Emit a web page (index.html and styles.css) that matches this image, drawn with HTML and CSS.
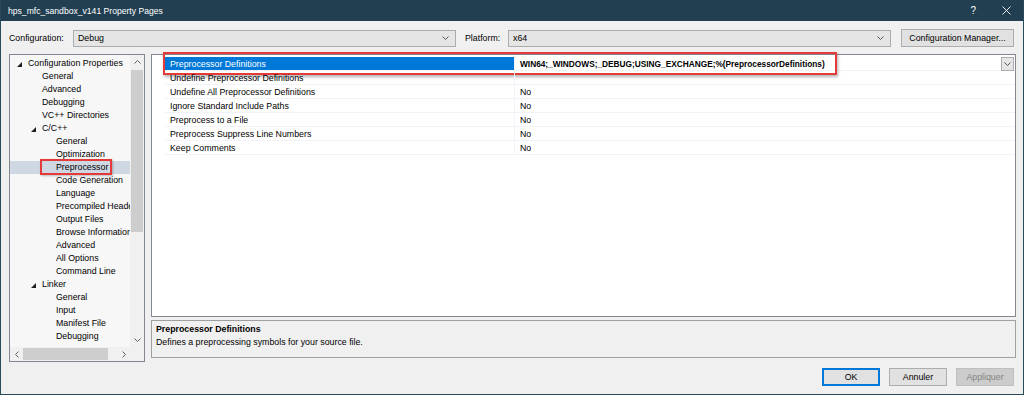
FILE: index.html
```html
<!DOCTYPE html>
<html lang="en">
  <head>
    <meta charset="UTF-8" />
    <title>hps_mfc_sandbox_v141 Property Pages</title>
    <link rel="stylesheet" href="styles.css">
  </head>
  <body>
    <div class="window">
      <div class="titlebar">
        <span class="title">hps_mfc_sandbox_v141 Property Pages</span>
        <span class="help">?</span>
        <svg class="close" width="9" height="9" viewBox="0 0 9 9">
          <path d="M0.5 0.5 L8.5 8.5 M8.5 0.5 L0.5 8.5" stroke="#fff" stroke-width="0.9" fill="none" />
        </svg>
      </div>

      <div class="config-row">
        <span class="cfg-label">Configuration:</span>
        <div class="combo">
          <span>Debug</span>
          <svg class="chev" width="7" height="4" viewBox="0 0 7 4"><path d="M0.5 0.5 L3.5 3.5 L6.5 0.5" stroke="#555" fill="none" /></svg>
        </div>
        <span class="plat-label">Platform:</span>
        <div class="combo">
          <span>x64</span>
          <svg class="chev" width="7" height="4" viewBox="0 0 7 4"><path d="M0.5 0.5 L3.5 3.5 L6.5 0.5" stroke="#555" fill="none" /></svg>
        </div>
        <button class="btn cfg-btn">Configuration Manager...</button>
      </div>

      <div class="main">
        <div class="tree">
          <div class="tree-items">
            <div class="node t0"><span class="twisty"><svg width="5" height="5" viewBox="0 0 5 5"><polygon points="5,0 5,5 0,5" fill="#1e1e1e" /></svg></span>Configuration Properties</div>
            <div class="node t1">General</div>
            <div class="node t1">Advanced</div>
            <div class="node t1">Debugging</div>
            <div class="node t1">VC++ Directories</div>
            <div class="node t1"><span class="twisty"><svg width="5" height="5" viewBox="0 0 5 5"><polygon points="5,0 5,5 0,5" fill="#1e1e1e" /></svg></span>C/C++</div>
            <div class="node t2">General</div>
            <div class="node t2">Optimization</div>
            <div class="node t2 selected"><span class="marked">Preprocessor</span></div>
            <div class="node t2">Code Generation</div>
            <div class="node t2">Language</div>
            <div class="node t2">Precompiled Headers</div>
            <div class="node t2">Output Files</div>
            <div class="node t2">Browse Information</div>
            <div class="node t2">Advanced</div>
            <div class="node t2">All Options</div>
            <div class="node t2">Command Line</div>
            <div class="node t1"><span class="twisty"><svg width="5" height="5" viewBox="0 0 5 5"><polygon points="5,0 5,5 0,5" fill="#1e1e1e" /></svg></span>Linker</div>
            <div class="node t2">General</div>
            <div class="node t2">Input</div>
            <div class="node t2">Manifest File</div>
            <div class="node t2">Debugging</div>
          </div>
          <div class="vscroll">
            <div class="arrow"><svg width="7" height="4" viewBox="0 0 7 4"><path d="M0.5 3.5 L3.5 0.5 L6.5 3.5" stroke="#606060" fill="none" /></svg></div>
            <div class="vthumb"></div>
            <div class="track"></div>
            <div class="arrow"><svg width="7" height="4" viewBox="0 0 7 4"><path d="M0.5 0.5 L3.5 3.5 L6.5 0.5" stroke="#606060" fill="none" /></svg></div>
          </div>
          <div class="hscroll">
            <div class="arrow"><svg width="4" height="7" viewBox="0 0 4 7"><path d="M3.5 0.5 L0.5 3.5 L3.5 6.5" stroke="#606060" fill="none" /></svg></div>
            <div class="hthumb"></div>
            <div class="track"></div>
            <div class="arrow"><svg width="4" height="7" viewBox="0 0 4 7"><path d="M0.5 0.5 L3.5 3.5 L0.5 6.5" stroke="#606060" fill="none" /></svg></div>
          </div>
          <div class="corner"></div>
        </div>

        <div class="right">
          <div class="grid">
            <div class="prop active">
              <div class="pname">Preprocessor Definitions</div>
              <div class="pval strong">WIN64;_WINDOWS;_DEBUG;USING_EXCHANGE;%(PreprocessorDefinitions)</div>
              <div class="drop"><svg width="7" height="4" viewBox="0 0 7 4"><path d="M0.5 0.5 L3.5 3.5 L6.5 0.5" stroke="#555" fill="none" /></svg></div>
            </div>
            <div class="prop"><div class="pname">Undefine Preprocessor Definitions</div><div class="pval"></div></div>
            <div class="prop"><div class="pname">Undefine All Preprocessor Definitions</div><div class="pval">No</div></div>
            <div class="prop"><div class="pname">Ignore Standard Include Paths</div><div class="pval">No</div></div>
            <div class="prop"><div class="pname">Preprocess to a File</div><div class="pval">No</div></div>
            <div class="prop"><div class="pname">Preprocess Suppress Line Numbers</div><div class="pval">No</div></div>
            <div class="prop"><div class="pname">Keep Comments</div><div class="pval">No</div></div>
          </div>
          <div class="desc">
            <div class="desc-title">Preprocessor Definitions</div>
            <div>Defines a preprocessing symbols for your source file.</div>
          </div>
        </div>
      </div>

      <div class="footer">
        <button class="btn default">OK</button>
        <button class="btn">Annuler</button>
        <button class="btn" disabled>Appliquer</button>
      </div>
    </div>
  </body>
</html>
```

FILE: styles.css
```css
body {
  margin: 0;
  font-family: "Liberation Sans", Arial, sans-serif;
  font-size: 8.8px;
  color: #000;
}
.window {
  width: 1024px;
  height: 395px;
  box-sizing: border-box;
  background: #f0f0f0;
  border: 1px solid #2a4a5c;
  border-top: none;
  display: flex;
  flex-direction: column;
  overflow: hidden;
}
.titlebar {
  height: 21px;
  margin: 0 -1px;
  background: #223f51;
  color: #fff;
  display: flex;
  align-items: center;
  padding: 0 0 0 8px;
}
.title {
  flex: 1;
  font-size: 8.6px;
}
.help {
  font-size: 10px;
  margin-right: 26px;
}
.close {
  margin-right: 13px;
}
.config-row {
  display: flex;
  align-items: center;
  height: 18px;
  margin-top: 8px;
  padding-left: 8px;
}
.config-row > * {
  flex-shrink: 0;
}
.cfg-label {
  width: 64px;
}
.combo {
  width: 383px;
  height: 17px;
  box-sizing: border-box;
  background: #e5e5e5;
  border: 1px solid #acacac;
  display: flex;
  align-items: center;
  justify-content: space-between;
  padding: 0 6px 0 4px;
}
.plat-label {
  width: 43px;
  margin-left: 9px;
}
.btn {
  font-family: inherit;
  font-size: 8.8px;
  background: #e1e1e1;
  border: 1px solid #adadad;
  color: #000;
  padding: 0;
  height: 18px;
}
.cfg-btn {
  width: 113px;
  margin-left: 10px;
}
.main {
  display: flex;
  gap: 6px;
  margin-top: 7px;
  padding-left: 8px;
  height: 308px;
}
.tree {
  width: 136px;
  box-sizing: border-box;
  border: 1px solid #828790;
  background: #f7f7f7;
  display: grid;
  grid-template-columns: 1fr 14px;
  grid-template-rows: 1fr 14px;
  overflow: hidden;
}
.tree-items {
  padding-top: 2px;
  overflow: hidden;
  white-space: nowrap;
}
.node {
  height: 13px;
  line-height: 13px;
}
.t0 { padding-left: 18px; }
.t1 { padding-left: 32px; }
.t2 { padding-left: 46px; }
.twisty {
  display: inline-block;
  width: 11px;
  margin-left: -11px;
  vertical-align: top;
  line-height: 13px;
}
.twisty svg {
  vertical-align: -1px;
}
.node.selected {
  background: #cfd7e3;
}
.marked {
  position: relative;
}
.marked::after {
  content: "";
  position: absolute;
  left: -16px;
  right: -4px;
  top: -3px;
  bottom: -3px;
  border: 2px solid #e53a3a;
  box-shadow: 1px 1px 2px rgba(0, 0, 0, 0.25);
}
.vscroll {
  display: flex;
  flex-direction: column;
  background: #f0f0f0;
}
.vscroll .arrow {
  height: 14px;
  display: flex;
  align-items: center;
  justify-content: center;
}
.vthumb {
  height: 162px;
  margin: 1px 1px 0;
  background: #cdcdcd;
}
.track {
  flex: 1;
}
.hscroll {
  display: flex;
  background: #f0f0f0;
}
.hscroll .arrow {
  width: 13px;
  display: flex;
  align-items: center;
  justify-content: center;
}
.hthumb {
  width: 85px;
  margin: 1px 0;
  background: #cdcdcd;
}
.corner {
  background: #f0f0f0;
}
.right {
  width: 865px;
  display: flex;
  flex-direction: column;
  gap: 3px;
}
.grid {
  height: 263px;
  box-sizing: border-box;
  border: 1px solid #828790;
  background: #fff;
  padding: 2px 0 0 13px;
}
.prop {
  display: flex;
  height: 14px;
  line-height: 14px;
  box-sizing: border-box;
  border-bottom: 1px solid #f0f3f7;
  position: relative;
}
.pname {
  width: 350px;
  padding-left: 5px;
  box-sizing: border-box;
  border-right: 1px solid #f0f3f7;
}
.pval {
  flex: 1;
  padding-left: 5px;
}
.strong {
  font-weight: bold;
  font-size: 8.3px;
}
.prop.active .pname {
  background: #0078d7;
  color: #fff;
}
.prop.active::after {
  content: "";
  position: absolute;
  left: -2px;
  top: -5px;
  width: 670px;
  height: 19px;
  border: 2px solid #e53a3a;
  box-shadow: 1px 2px 3px rgba(0, 0, 0, 0.3);
}
.drop {
  width: 11px;
  height: 12px;
  margin: 0 1px 0 0;
  background: #e5e5e5;
  border: 1px solid #adadad;
  display: flex;
  align-items: center;
  justify-content: center;
}
.desc {
  height: 38px;
  box-sizing: border-box;
  border: 1px solid #a0a0a0;
  background: #f0f0f0;
  padding: 2px 4px;
  line-height: 13px;
}
.desc-title {
  font-weight: bold;
}
.footer {
  display: flex;
  justify-content: flex-end;
  gap: 9px;
  margin-top: 6px;
  padding-right: 9px;
}
.footer .btn {
  width: 58px;
}
.btn.default {
  border-color: #0078d7;
  box-shadow: inset 0 0 0 1px #0078d7;
}
.btn:disabled {
  background: #cccccc;
  border-color: #bfbfbf;
  color: #838383;
}
```
